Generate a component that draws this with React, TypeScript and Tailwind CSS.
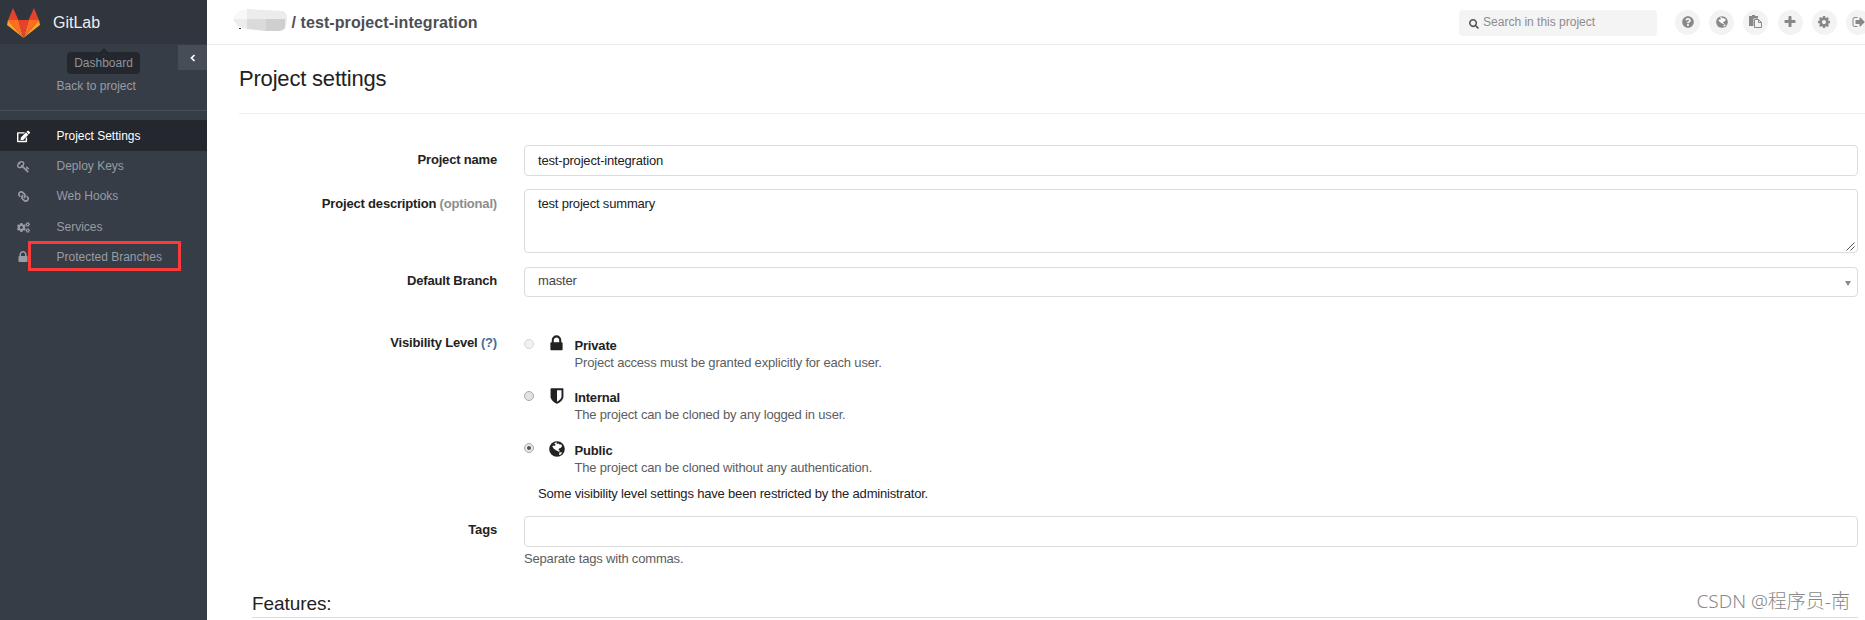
import React from 'react';
import { FaCogs, FaEdit, FaLink, FaQuestionCircle, FaSearch } from 'react-icons/fa';

interface IconProps {
  className?: string;
}

const Glyph: React.FC<IconProps & { d: string }> = ({ d, className }) => (
  <svg viewBox="0 0 1792 1792" fill="currentColor" className={className}>
    <path d={d} />
  </svg>
);

const KEY = 'M832 512q0-80-56-136t-136-56-136 56-56 136q0 42 19 83-41-19-83-19-80 0-136 56t-56 136 56 136 136 56 136-56 56-136q0-42-19-83 41 19 83 19 80 0 136-56t56-136zm851 704q0 17-49 66t-66 49q-9 0-28.5-16t-36.5-33-38.5-40-24.5-26l-96 96 220 220q28 28 28 68 0 42-39 81t-81 39q-40 0-68-28l-671-671q-176 131-365 131-163 0-265.5-102.5t-102.5-265.5q0-160 95-313t248-248 313-95q163 0 265.5 102.5t102.5 265.5q0 189-131 365l355 355 96-96q-3-3-26-24.5t-40-38.5-33-36.5-16-28.5q0-17 49-66t66-49q13 0 23 10 6 6 46 44.5t82 79.5 86.5 86 73 78 28.5 41z';
const LOCK = 'M640 768h512v-192q0-106-75-181t-181-75-181 75-75 181v192zm832 96v576q0 40-28 68t-68 28h-960q-40 0-68-28t-28-68v-576q0-40 28-68t68-28h32v-192q0-184 132-316t316-132 316 132 132 316v192h32q40 0 68 28t28 68z';
const SHIELD = 'M1344 960v-640h-448v1137q119-63 213-137 235-184 235-360zm192-768v768q0 86-33.5 170.5t-83 150-118 127.5-126.5 103-121 77.5-89.5 49.5-42.5 20q-12 6-26 6t-26-6q-16-7-42.5-20t-89.5-49.5-121-77.5-126.5-103-118-127.5-83-150-33.5-170.5v-768q0-26 19-45t45-19h1152q26 0 45 19t19 45z';
const PLUS = 'M1600 736v192q0 40-28 68t-68 28h-416v416q0 40-28 68t-68 28h-192q-40 0-68-28t-28-68v-416h-416q-40 0-68-28t-28-68v-192q0-40 28-68t68-28h416v-416q0-40 28-68t68-28h192q40 0 68 28t28 68v416h416q40 0 68 28t28 68z';
const COG = 'M1152 896q0-106-75-181t-181-75-181 75-75 181 75 181 181 75 181-75 75-181zm512-109v222q0 12-8 23t-20 13l-185 28q-19 54-39 91 35 50 107 138 10 12 10 25t-9 23q-27 37-99 108t-94 71q-12 0-26-9l-138-108q-44 23-91 38-16 136-29 186-7 28-36 28h-222q-14 0-24.5-8.5t-11.5-21.5l-28-184q-49-16-90-37l-141 107q-10 9-25 9-14 0-25-11-126-114-165-168-7-10-7-23 0-12 8-23 15-21 51-66.5t54-70.5q-27-50-41-99l-183-27q-13-2-21-12.5t-8-23.5v-222q0-12 8-23t19-13l186-28q14-46 39-92-40-57-107-138-10-12-10-24 0-10 9-23 26-36 98.5-107.5t94.5-71.5q13 0 26 10l138 107q44-23 91-38 16-136 29-186 7-28 36-28h222q14 0 24.5 8.5t11.5 21.5l28 184q49 16 90 37l142-107q9-9 24-9 13 0 25 10 129 119 165 170 7 8 7 22 0 12-8 23-15 21-51 66.5t-54 70.5q26 50 41 98l183 28q13 2 21 12.5t8 23.5z';
const SIGN_OUT = 'M704 1440q0 4 1 20t.5 26.5-3 23.5-10 19.5-20.5 6.5h-320q-119 0-203.5-84.5t-84.5-203.5v-704q0-119 84.5-203.5t203.5-84.5h320q13 0 22.5 9.5t9.5 22.5q0 4 1 20t.5 26.5-3 23.5-10 19.5-20.5 6.5h-320q-66 0-113 47t-47 113v704q0 66 47 113t113 47h312l11.5 1 11.5 3 8 5.5 7 9 2 13.5zm928-544q0 26-19 45l-544 544q-19 19-45 19t-45-19-19-45v-288h-448q-26 0-45-19t-19-45v-384q0-26 19-45t45-19h448v-288q0-26 19-45t45-19 45 19l544 544q19 19 19 45z';

const Globe: React.FC<IconProps> = ({ className }) => (
  <svg viewBox="0 0 16 16" className={className}>
    <circle cx="8" cy="8" r="7.8" fill="currentColor" />
    <path
      fill="#fff"
      d="M5 2.200 8 1.300 7.500 3 9.500 2.500 10.500 3.500 12.500 3.500 13 5.500 11.500 7 10 7.500 9.500 9.300 11.200 9.800 10 10.800 7 9.300 4.800 7.800 3.200 5.300 4.500 4.500 6 5 6.500 3.500zM10.500 11.300l2.800.2-1.600 2-1.700.6z"
    />
  </svg>
);

const Clipboard: React.FC<IconProps> = ({ className }) => (
  <svg viewBox="0 0 13 13" className={className}>
    <path fill="currentColor" d="M0 1h3V0h3v1h3v2.500H4.500V11H0z" />
    <path fill="none" stroke="currentColor" d="M5.500 4.500h4l3 3v5h-7zM9.500 4.500v3h3" />
  </svg>
);

const Logo: React.FC = () => (
  <svg width="33" height="31" viewBox="0 0 33 31" className="shrink-0">
    <path fill="#e24329" d="M6 0 11.500 12H1zM27 0l5 12H21.500z" />
    <path fill="#fca326" d="M1 12 0 17l16.500 13zM32 12l1 5-16.500 13z" />
    <path fill="#fc6d26" d="M1 12h10.500l5 18zM32 12H21.500l-5 18z" />
    <path fill="#e24329" d="M11 12h11l-5.500 18z" />
  </svg>
);

const navItems = [
  {
    label: 'Project Settings',
    icon: <FaEdit className="size-[13px]" />,
    className: 'h-[31px] pt-px bg-[#24272d] text-white',
  },
  { label: 'Deploy Keys', icon: <Glyph d={KEY} className="size-[13px]" />, className: 'h-[30px]' },
  { label: 'Web Hooks', icon: <FaLink className="size-[11px] -scale-x-100" />, className: 'h-[30px]' },
  { label: 'Services', icon: <FaCogs className="size-[13px]" />, className: 'h-[31px] pt-px' },
  {
    label: 'Protected Branches',
    icon: <Glyph d={LOCK} className="size-[14px]" />,
    className: 'h-[30px]',
    marked: true,
  },
];

const Sidebar: React.FC = () => (
  <aside className="w-[207px] shrink-0 bg-[#373d47] text-xs text-[#979ca5]">
    <div className="flex h-11 items-start bg-[#30353e] pt-2 pl-[7px]">
      <Logo />
      <span className="ml-[13px] text-base leading-[29px] text-[#eee]">GitLab</span>
    </div>
    <div className="relative h-[67px] border-b border-[#485059]">
      <div className="absolute top-1 left-[99px] border-x-[5px] border-b-[5px] border-x-transparent border-b-[#24272d]" />
      <div className="absolute top-2 left-[67px] h-[22px] w-[73px] rounded bg-[#24272d] text-center leading-[22px] text-[#8f949b]">
        Dashboard
      </div>
      <button className="absolute top-px right-0 flex h-[25px] w-[29px] items-center justify-center bg-[#474d57] text-white">
        <svg width="6" height="8" viewBox="0 0 6 8" fill="none" stroke="currentColor" strokeWidth="1.7">
          <path d="M4.500 1 1.500 4l3 3" />
        </svg>
      </button>
      <a className="block pt-[33px] pl-[56.500px] leading-[18px]">Back to project</a>
    </div>
    <nav className="pt-[9px]">
      {navItems.map((item) => (
        <div key={item.label} className={`relative flex items-center ${item.className}`}>
          <span className="ml-[15px] flex w-4 justify-center">{item.icon}</span>
          <span className="ml-[25.500px] leading-[18px]">{item.label}</span>
          {item.marked && <div className="absolute -top-px left-7 h-[30px] w-[153px] border-3 border-[#fb3a3a]" />}
        </div>
      ))}
    </nav>
  </aside>
);

const headerIcons = [
  <FaQuestionCircle className="size-3" />,
  <Globe className="size-3" />,
  <Clipboard className="size-[13px]" />,
  <Glyph d={PLUS} className="size-[14px]" />,
  <Glyph d={COG} className="size-[14px]" />,
  <Glyph d={SIGN_OUT} className="size-[14px]" />,
];

const Header: React.FC = () => (
  <header className="flex h-[45px] items-start border-b border-[#e9e9e9]">
    <svg width="56" height="23" viewBox="0 0 56 23" className="mt-[9px] ml-[25px] shrink-0">
      <path fill="#f8f8f8" d="M15 0Q3 1 1 10h14z" />
      <path fill="#ececec" d="M15 0l36 2q5 3 4 8H15zM1 10h14v10Q4 18 1 10z" />
      <path fill="#dadada" d="M15 10h19v12l-19-2z" />
      <path fill="#cfcfcf" d="M34 10h19v9q-2 3-7 3H34z" />
      <path fill="#ececec" d="M53 10h2q0 5-2 9z" />
      <path fill="#333" d="M7 19h2v1H7z" />
    </svg>
    <h1 className="ml-[3.500px] pt-[12.500px] text-base leading-5 font-bold tracking-[0.080px] text-[#4c4e54]">
      / test-project-integration
    </h1>
    <div className="mt-[10px] mr-[18px] ml-auto flex h-[26px] w-[198px] items-center rounded bg-[#f4f4f4] pl-[10px] text-xs text-[#8c8c8c]">
      <FaSearch className="mt-[2px] size-[10px] text-[#555]" />
      <span className="-mt-[3px] ml-1 leading-4">Search in this project</span>
    </div>
    <div className="-mr-[6px] flex shrink-0 gap-[9.200px] pt-[10px]">
      {headerIcons.map((icon, i) => (
        <span key={i} className="flex size-[25px] items-center justify-center rounded-full bg-[#f3f3f3] pb-[2px] text-[#888]">
          {icon}
        </span>
      ))}
    </div>
  </header>
);

const FormRow: React.FC<{
  label: React.ReactNode;
  className: string;
  labelClass?: string;
  children: React.ReactNode;
}> = ({ label, className, labelClass = 'pt-[5px]', children }) => (
  <div className={`flex ${className}`}>
    <div className={`mr-[27px] w-[258px] shrink-0 text-right leading-[18px] font-bold ${labelClass}`}>{label}</div>
    <div className="min-w-0 flex-1">{children}</div>
  </div>
);

const levels = [
  {
    name: 'Private',
    text: 'Project access must be granted explicitly for each user.',
    icon: <Glyph d={LOCK} className="size-[19px] shrink-0" />,
    radio: 'mt-0.5 border-[#d5d5d5] bg-[#f1f1f1]',
    height: 'h-[52px]',
  },
  {
    name: 'Internal',
    text: 'The project can be cloned by any logged in user.',
    icon: <Glyph d={SHIELD} className="size-[18px]" />,
    radio: 'mt-0.5 border-[#a8a8a8] bg-[#e2e2e2]',
    height: 'h-[53px]',
  },
  {
    name: 'Public',
    text: 'The project can be cloned without any authentication.',
    icon: <Globe className="size-4" />,
    radio: 'mt-px border-[#a8a8a8] bg-[#e8e8e8]',
    height: 'h-[52px]',
    checked: true,
  },
];

const App: React.FC = () => (
  <div className="relative flex h-[620px] overflow-hidden bg-white font-['Liberation_Sans',Arial,sans-serif] text-[13px] text-[#222]">
    <Sidebar />
    <div className="min-w-0 flex-1">
      <Header />
      <main className="pl-8">
        <h2 className="h-[69px] border-b border-[#eee] pt-[20px] text-[22px] leading-[27px] tracking-[-0.190px]">
          Project settings
        </h2>
        <form className="pt-[31px] pr-[7px] tracking-[-0.180px]">
          <FormRow label="Project name" className="h-11" labelClass="pt-[6px]">
            <div className="h-[31px] rounded border border-[#dcdcdc] px-[13px] leading-[30px]">test-project-integration</div>
          </FormRow>
          <FormRow
            label={<>Project description <span className="text-[#8c8c8c]">(optional)</span></>}
            className="h-[78px]"
            labelClass="pt-[6px]"
          >
            <div className="relative h-16 rounded border border-[#dcdcdc] px-[13px] pt-[5px] leading-[18px]">
              test project summary
              <svg className="absolute right-0.5 bottom-px" width="9" height="9" viewBox="0 0 9 9" stroke="#555">
                <path d="M.5 8.500 8.500.5M4.500 8.500l4-4" />
              </svg>
            </div>
          </FormRow>
          <FormRow label="Default Branch" className="h-[62px]">
            <div className="flex h-[30px] items-center justify-between rounded border border-[#dcdcdc] pr-[6px] pl-[13px] text-[#444]">
              <span className="pb-[2px]">master</span>
              <svg width="6" height="5" viewBox="0 0 6 5" className="mt-0.5"><path fill="#888" d="M0 0h6L3 5z" /></svg>
            </div>
          </FormRow>
          <FormRow label={<>Visibility Level <span className="text-[#446e9b]">(?)</span></>} className="h-[187px]">
            {levels.map((level) => (
              <div key={level.name} className={`flex items-start pt-2 ${level.height}`}>
                <span className={`flex size-[10px] shrink-0 items-center justify-center rounded-full border ${level.radio}`}>
                  {level.checked && <span className="size-1 rounded-full bg-[#555]" />}
                </span>
                <span className="-mt-[2.500px] ml-[13.500px] flex size-[18px] items-center justify-center">{level.icon}</span>
                <div className="ml-[9px] leading-[18px]">
                  <div className="font-bold">{level.name}</div>
                  <div className="-mt-px text-[#5c5d5e]">{level.text}</div>
                </div>
              </div>
            ))}
            <div className="-mt-px pl-[14px] leading-[18px]">
              Some visibility level settings have been restricted by the administrator.
            </div>
          </FormRow>
          <FormRow label="Tags" className="h-[77px]">
            <div className="h-[31px] rounded border border-[#dcdcdc]" />
            <div className="pt-[3px] leading-[18px] text-[#5c5d5e]">Separate tags with commas.</div>
          </FormRow>
          <h3 className="ml-[13px] border-b border-[#ddd] pb-[2px] text-[19px] leading-[22px] tracking-[-0.080px]">Features:</h3>
        </form>
      </main>
    </div>
    <div className="absolute right-[15px] bottom-[7px] font-['Noto_Sans','Noto_Sans_CJK_SC',sans-serif] text-[19px] leading-6 font-light text-[#888]">
      CSDN @程序员-南
    </div>
  </div>
);

export default App;
